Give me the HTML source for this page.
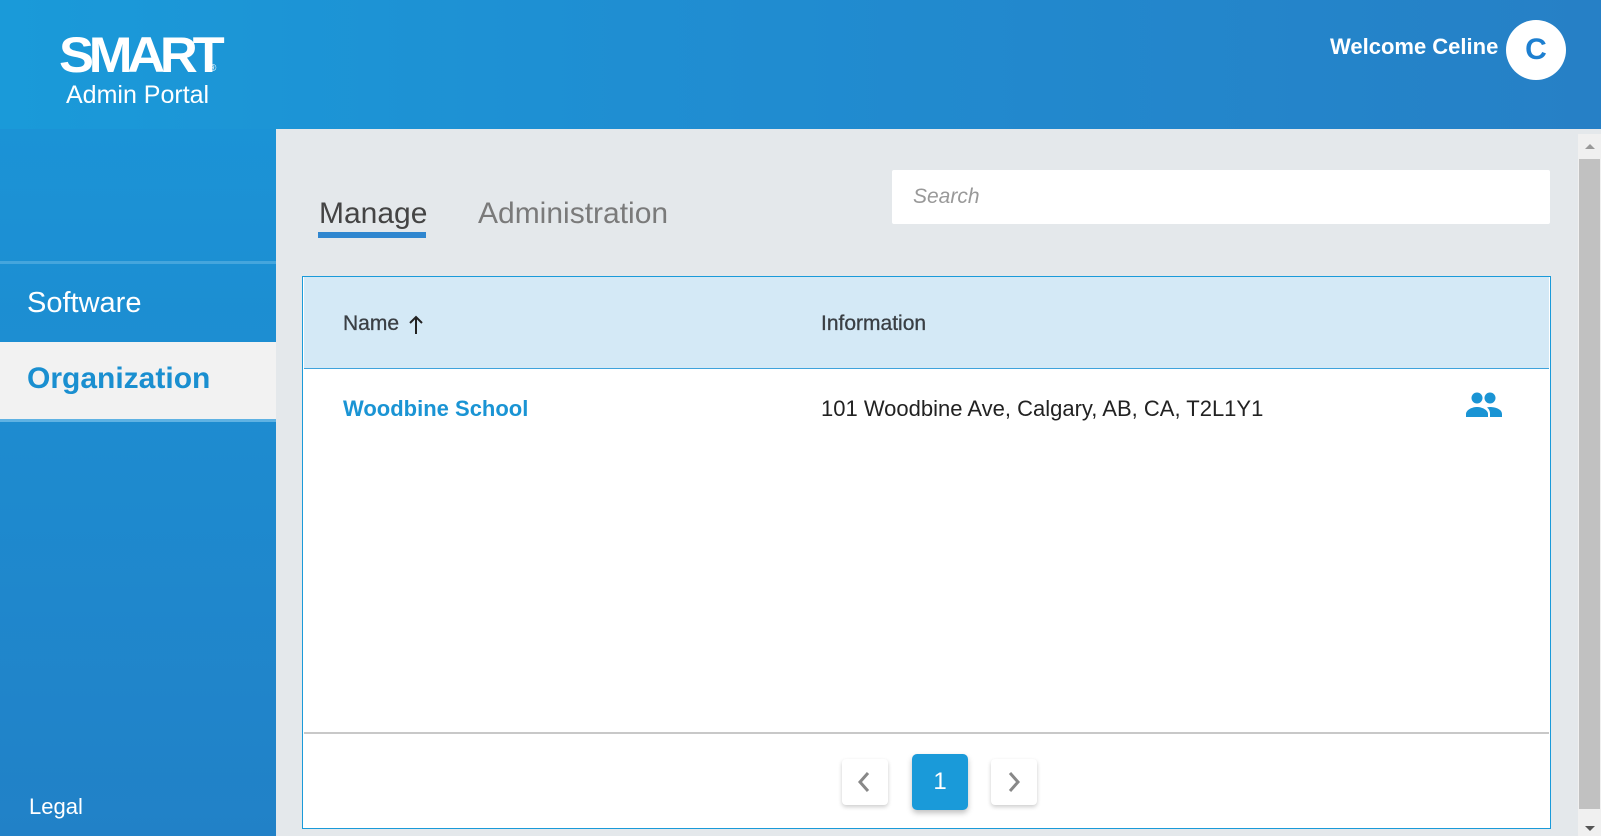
<!DOCTYPE html>
<html><head><meta charset="utf-8"><style>
*{margin:0;padding:0;box-sizing:border-box}
body{width:1601px;height:836px;overflow:hidden;font-family:"Liberation Sans",sans-serif;position:relative;background:#e4e8eb}
.hdr{position:absolute;left:0;top:0;width:1601px;height:129px;background:linear-gradient(90deg,#1a9ad9 0%,#1f8ed2 40%,#2680c6 100%)}
.side{position:absolute;left:0;top:129px;width:276px;height:707px;background:linear-gradient(180deg,#1b93d6 0%,#2181c7 100%)}
.abs{position:absolute}
</style></head><body>
<div class="hdr"></div>
<div class="side"></div>
<div class="abs" style="left:59px;top:28px;color:#fff;font-size:50px;font-weight:bold;letter-spacing:-5px;line-height:54px;transform:scaleX(1.05);transform-origin:left">SMART</div>
<div class="abs" style="left:209px;top:63px;color:#fff;font-size:10px">®</div>
<div class="abs" style="left:66px;top:81px;color:#fff;font-size:25px">Admin Portal</div>
<div class="abs" style="left:1330px;top:34px;color:#fff;font-size:22px;font-weight:bold">Welcome Celine</div>
<div class="abs" style="left:1506px;top:20px;width:60px;height:60px;border-radius:50%;background:#fff;color:#1d7fd0;font-size:30px;font-weight:bold;text-align:center;line-height:60px">C</div>
<div class="abs" style="left:0;top:261px;width:276px;height:3px;background:#45a6dd"></div>
<div class="abs" style="left:27px;top:287px;color:#fff;font-size:29px">Software</div>
<div class="abs" style="left:0;top:342px;width:276px;height:77px;background:#f2f2f2"></div>
<div class="abs" style="left:0;top:419px;width:276px;height:3px;background:#5fb2e3"></div>
<div class="abs" style="left:27px;top:362px;color:#1a8fd0;font-size:30px;font-weight:bold">Organization</div>
<div class="abs" style="left:29px;top:794px;color:#fff;font-size:22px">Legal</div>
<div class="abs" style="left:319px;top:197px;color:#444;font-size:30px">Manage</div>
<div class="abs" style="left:318px;top:232px;width:108px;height:6px;background:#2f86cf"></div>
<div class="abs" style="left:478px;top:197px;color:#7a7a7a;font-size:30px">Administration</div>
<div class="abs" style="left:892px;top:170px;width:658px;height:54px;background:#fff;border-radius:2px"></div>
<div class="abs" style="left:913px;top:185px;color:#999;font-size:21px;font-style:italic">Search</div>
<div class="abs" style="left:302px;top:276px;width:1249px;height:553px;background:#fff;border:1.5px solid #1a9ad9"></div>
<div class="abs" style="left:304px;top:277px;width:1245px;height:92px;background:#d4e9f6;border-bottom:1.5px solid #3fa3dc"></div>
<div class="abs" style="left:343px;top:312px;color:#3a3f44;font-size:21px;-webkit-text-stroke:0.3px #3a3f44">Name</div>
<svg class="abs" style="left:408px;top:314px" width="16" height="22"><path d="M8 3v17M2 9l6-6 6 6" stroke="#222" stroke-width="2" fill="none"/></svg>
<div class="abs" style="left:821px;top:312px;color:#3a3f44;font-size:21px;-webkit-text-stroke:0.3px #3a3f44">Information</div>
<div class="abs" style="left:343px;top:396px;color:#1a94d4;font-size:22px;font-weight:bold">Woodbine School</div>
<div class="abs" style="left:821px;top:396px;color:#222;font-size:22px">101 Woodbine Ave, Calgary, AB, CA, T2L1Y1</div>
<svg class="abs" style="left:1465px;top:391px" width="38" height="28" viewBox="0 0 38 28"><circle cx="12" cy="7" r="5.5" fill="#1a94d4"/><circle cx="25" cy="7" r="5.5" fill="#1a94d4"/><path d="M1 26v-3c0-4 6-7 11-7s11 3 11 7v3z" fill="#1a94d4"/><path d="M25 16c5 0 12 2 12 7v3h-12v-3c0-3-1-5-3-6.5 1-.3 2-.5 3-.5z" fill="#1a94d4"/></svg>
<div class="abs" style="left:304px;top:732px;width:1245px;height:1.5px;background:#c8c8c8"></div>
<div class="abs" style="left:842px;top:759px;width:46px;height:46px;background:#fff;border-radius:4px;box-shadow:0 2px 4px rgba(0,0,0,.2)"></div>
<svg class="abs" style="left:855px;top:770px" width="20" height="24"><path d="M13 3L5 12l8 9" stroke="#888" stroke-width="3" fill="none"/></svg>
<div class="abs" style="left:912px;top:754px;width:56px;height:56px;background:#1a9ad9;border-radius:5px;box-shadow:0 3px 6px rgba(0,0,0,.25);color:#fff;font-size:24px;text-align:center;line-height:56px">1</div>
<div class="abs" style="left:991px;top:759px;width:46px;height:46px;background:#fff;border-radius:4px;box-shadow:0 2px 4px rgba(0,0,0,.2)"></div>
<svg class="abs" style="left:1004px;top:770px" width="20" height="24"><path d="M6 3l8 9-8 9" stroke="#888" stroke-width="3" fill="none"/></svg>
<div class="abs" style="left:1578px;top:134px;width:23px;height:702px;background:#f0f0f0"></div>
<div class="abs" style="left:1579px;top:159px;width:21px;height:650px;background:#c1c1c1"></div>
<svg class="abs" style="left:1583px;top:141px" width="14" height="10"><path d="M2 8l5-5 5 5z" fill="#999"/></svg>
<svg class="abs" style="left:1583px;top:824px" width="14" height="10"><path d="M2 2l5 5 5-5z" fill="#555"/></svg>
</body></html>
